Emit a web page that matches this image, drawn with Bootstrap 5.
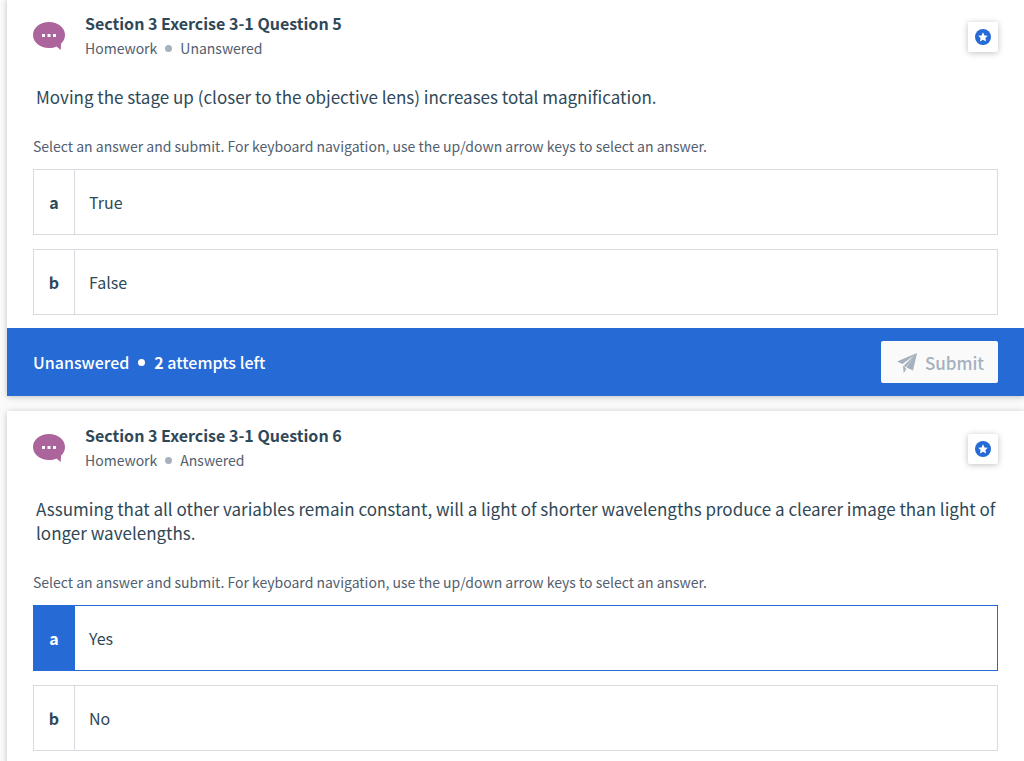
<!DOCTYPE html>
<html lang="en">
<head>
<meta charset="utf-8">
<meta name="viewport" content="width=device-width, initial-scale=1">
<title>Section 3 Exercise 3-1</title>
<link href="https://cdn.jsdelivr.net/npm/bootstrap@5.3.0/dist/css/bootstrap.min.css" rel="stylesheet">
<style>
  :root { --blue: #266ad6; --ink: #2f4858; --muted: #52606f; --line: #d8dce0; }
  body { background: #fafafa; color: var(--ink); font-family: "Noto Sans CJK SC", "Open Sans", sans-serif; font-size: 16px; line-height: 24px; overflow-x: hidden; }
  .questions { margin-top: -1px; padding-left: 7px; gap: 15px; }
  .question { background: #fff; box-shadow: 0 1px 6px rgba(0, 0, 0, .24); }
  .question-body { padding: 12px 26px 13px; }
  .question-head { gap: 20px; margin-bottom: 25px; }
  .question-head h2 { font-size: 16px; line-height: 24px; margin-bottom: 1px; }
  .meta, .hint { font-size: 14px; color: var(--muted); }
  .meta { gap: 8px; }
  .dot { width: 7px; height: 7px; background: #a5b1bd; }
  .bubble { margin-top: 11px; }
  .star-btn { width: 30px; height: 30px; margin-top: 11px; background: #fff; border: 0; border-radius: 2px; box-shadow: 0 1px 6px rgba(0, 0, 0, .25); }
  .prompt { padding-left: 3px; margin-bottom: 25px; font-size: 17px; }
  .hint { margin-bottom: 11px; }
  .options { gap: 14px; }
  .option { height: 66px; border: 1px solid var(--line); cursor: pointer; }
  .option-key { width: 41px; border-right: 1px solid var(--line); }
  .option-text { padding: 0 14px; }
  .btn-check:checked + .option { border-color: var(--blue); }
  .btn-check:checked + .option .option-key { background: var(--blue); border-color: var(--blue); color: #fff; }
  .submit-bar { height: 68px; padding: 0 26px; background: var(--blue); color: #fff; }
  .status { gap: 9px; font-weight: 500; }
  .status .dot { background: #fff; }
  .submit-btn, .submit-btn:disabled { width: 117px; height: 42px; gap: 8px; padding: 2px 0 0 2px; border: 0; border-radius: 2px; background: #fafafa; color: #a5b1bd; font-size: 17px; font-weight: 500; opacity: 1; }
</style>
<script src="https://cdn.jsdelivr.net/npm/bootstrap@5.3.0/dist/js/bootstrap.bundle.min.js" defer></script>
</head>
<body>
<svg class="d-none" aria-hidden="true">
  <symbol id="bubble" viewBox="0 0 32 28">
    <path fill="#ac659c" d="M16 0C25 0 32 5.600 32 13c0 3.400-1.400 6.400-3.900 8.600L27.700 28 23.500 24.500C21.300 25.500 18.700 26 16 26 7 26 0 20.400 0 13S7 0 16 0Z"/>
    <path fill="#fff" d="M9 12h3v3H9zM14.500 12h3v3h-3zM20 12h3v3h-3z"/>
  </symbol>
  <symbol id="star" viewBox="0 0 16 16">
    <circle cx="8" cy="8" r="8" fill="#266ad6"/>
    <path fill="#fff" d="m8 3.300 1.500 3.100 3.300.4-2.400 2.300.6 3.300L8 10.800 5 12.400l.6-3.300-2.400-2.300 3.300-.4Z"/>
  </symbol>
  <symbol id="plane" viewBox="0 0 20 20">
    <path fill="currentColor" d="M20 0 0 8.500 5.500 11 17 2.500 7 12.500 8 14.500l2-1.500L18 2 9.500 14.500 16 17.500ZM5.800 12.500 6.800 20 9.300 16Z"/>
  </symbol>
</svg>

<main class="questions d-flex flex-column">
  <article class="question">
    <div class="question-body">
      <header class="question-head d-flex align-items-start">
        <svg class="bubble flex-shrink-0" width="32" height="28" aria-hidden="true"><use href="#bubble"/></svg>
        <div class="flex-grow-1">
          <h2 class="fw-bold">Section 3 Exercise 3-1 Question 5</h2>
          <div class="meta d-flex align-items-center"><span>Homework</span><span class="dot rounded-circle"></span><span>Unanswered</span></div>
        </div>
        <button type="button" class="star-btn d-flex align-items-center justify-content-center p-0" aria-label="Bookmark question 5"><svg width="16" height="16"><use href="#star"/></svg></button>
      </header>
      <p class="prompt">Moving the stage up (closer to the objective lens) increases total magnification.</p>
      <p class="hint" id="hint5">Select an answer and submit. For keyboard navigation, use the up/down arrow keys to select an answer.</p>
      <div class="options d-flex flex-column" role="radiogroup" aria-labelledby="hint5">
        <div>
          <input class="btn-check" type="radio" name="q5" id="q5a">
          <label class="option d-flex" for="q5a"><span class="option-key d-flex align-items-center justify-content-center fw-bold">a</span><span class="option-text d-flex align-items-center">True</span></label>
        </div>
        <div>
          <input class="btn-check" type="radio" name="q5" id="q5b">
          <label class="option d-flex" for="q5b"><span class="option-key d-flex align-items-center justify-content-center fw-bold">b</span><span class="option-text d-flex align-items-center">False</span></label>
        </div>
      </div>
    </div>
    <footer class="submit-bar d-flex align-items-center justify-content-between">
      <div class="status d-flex align-items-center"><span>Unanswered</span><span class="dot rounded-circle"></span><span><b>2</b> attempts left</span></div>
      <button type="button" class="submit-btn btn d-flex align-items-center justify-content-center" disabled><svg width="20" height="20" aria-hidden="true"><use href="#plane"/></svg>Submit</button>
    </footer>
  </article>

  <article class="question">
    <div class="question-body">
      <header class="question-head d-flex align-items-start">
        <svg class="bubble flex-shrink-0" width="32" height="28" aria-hidden="true"><use href="#bubble"/></svg>
        <div class="flex-grow-1">
          <h2 class="fw-bold">Section 3 Exercise 3-1 Question 6</h2>
          <div class="meta d-flex align-items-center"><span>Homework</span><span class="dot rounded-circle"></span><span>Answered</span></div>
        </div>
        <button type="button" class="star-btn d-flex align-items-center justify-content-center p-0" aria-label="Bookmark question 6"><svg width="16" height="16"><use href="#star"/></svg></button>
      </header>
      <p class="prompt">Assuming that all other variables remain constant, will a light of shorter wavelengths produce a clearer image than light of longer wavelengths.</p>
      <p class="hint" id="hint6">Select an answer and submit. For keyboard navigation, use the up/down arrow keys to select an answer.</p>
      <div class="options d-flex flex-column" role="radiogroup" aria-labelledby="hint6">
        <div>
          <input class="btn-check" type="radio" name="q6" id="q6a" checked>
          <label class="option d-flex" for="q6a"><span class="option-key d-flex align-items-center justify-content-center fw-bold">a</span><span class="option-text d-flex align-items-center">Yes</span></label>
        </div>
        <div>
          <input class="btn-check" type="radio" name="q6" id="q6b">
          <label class="option d-flex" for="q6b"><span class="option-key d-flex align-items-center justify-content-center fw-bold">b</span><span class="option-text d-flex align-items-center">No</span></label>
        </div>
      </div>
    </div>
  </article>
</main>
</body>
</html>
